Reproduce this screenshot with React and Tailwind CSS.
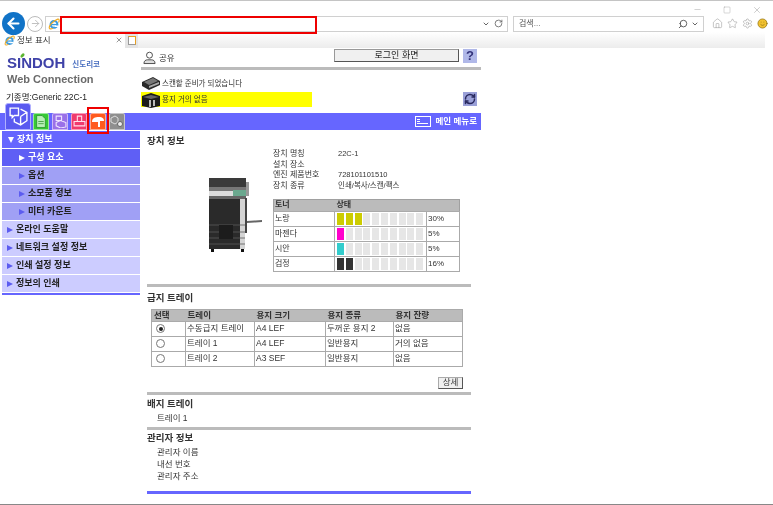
import { ArrowLeft, ArrowRight, ChevronDown, Home, Minus, RefreshCw, RotateCw, Search, Settings, Smile, Square, Star, X } from "lucide-react";

const FONT = "font-['Liberation_Sans','Noto_Sans_CJK_KR',sans-serif]";

const menu = [
    { label: "장치 정보", cls: "bg-[#6666ff] text-white font-bold pl-[6px]", arrow: "down" },
    { label: "구성 요소", cls: "bg-[#5f5ff5] text-white font-bold pl-[17px]", arrowCls: "border-l-white" },
    { label: "옵션", cls: "bg-[#a0a0f5] text-[#222] font-bold pl-[17px]" },
    { label: "소모품 정보", cls: "bg-[#a0a0f5] text-[#222] font-bold pl-[17px]" },
    { label: "미터 카운트", cls: "bg-[#a0a0f5] text-[#222] font-bold pl-[17px]" },
    { label: "온라인 도움말", cls: "bg-[#ccccff] text-[#222] font-bold pl-[5px]" },
    { label: "네트워크 설정 정보", cls: "bg-[#ccccff] text-[#222] font-bold pl-[5px]" },
    { label: "인쇄 설정 정보", cls: "bg-[#ccccff] text-[#222] font-bold pl-[5px]" },
    { label: "정보의 인쇄", cls: "bg-[#ccccff] text-[#222] font-bold pl-[5px]" },
];

const toners = [
    { name: "노랑", count: 3, color: "bg-[#cccc00]", pct: "30%" },
    { name: "마젠다", count: 1, color: "bg-[#ff00cc]", pct: "5%" },
    { name: "시안", count: 1, color: "bg-[#33cccc]", pct: "5%" },
    { name: "검정", count: 2, color: "bg-[#333333]", pct: "16%" },
];

const trays = [
    ["수동급지 트레이", "A4 LEF", "두꺼운 용지 2", "없음"],
    ["트레이 1", "A4 LEF", "일반용지", "거의 없음"],
    ["트레이 2", "A3 SEF", "일반용지", "없음"],
];

function IeIcon({ size = 14 }) {
    return (
        <svg width={size} height={size} viewBox="0 0 16 16" fill="none">
            <circle cx="8" cy="8.5" r="4.6" stroke="#3b9be0" strokeWidth="2.6" />
            <path d="M3.5 8.8h9" stroke="#3b9be0" strokeWidth="1.8" />
            <path d="M9 10h5v2H9z" fill="#fff" />
            <path d="M2 14C.2 11.5 6 4 13 1.5c2.2-.4 2.4 2 1 4.5M2 14c1.2 1 3 .5 4.5-.3" stroke="#eeaa22" strokeWidth="1.5" />
        </svg>
    );
}

function PrinterIcon({ yellow }) {
    return (
        <svg width="20" height="16" viewBox="0 0 20 16">
            {yellow ? (
                <>
                    <path d="M1 4 10 1l9 3v10l-9 2-9-2z" fill="#1c1c1c" />
                    <path d="M2 5l8-2 8 2-8 2z" fill="#666" />
                    <path d="M8 8h2v7H8zM12 8h2v6h-2z" fill="#bbb" />
                </>
            ) : (
                <>
                    <path d="M1 6 12 1l7 4v4l-11 5-7-4z" fill="#2a2a2a" />
                    <path d="M3 6l9-4 5 3-9 4z" fill="#777" />
                    <path d="M8 10l10-4v2L8 12z" fill="#aaa" />
                </>
            )}
        </svg>
    );
}

function Copier() {
    return (
        <svg width="54" height="74" viewBox="0 0 54 74">
            <rect x="0" y="0" width="37" height="9" fill="#3a3a3a" />
            <rect x="0" y="9" width="37" height="4" fill="#777" />
            <rect x="0" y="13" width="39" height="5" fill="#ddd" />
            <rect x="24" y="12" width="15" height="6" fill="#6aa88e" />
            <rect x="37" y="4" width="3" height="14" fill="#999" />
            <rect x="0" y="18" width="37" height="3" fill="#666" />
            <rect x="0" y="21" width="31" height="50" fill="#2a2a2a" />
            <rect x="31" y="21" width="5" height="50" fill="#d4d4d4" />
            <rect x="36" y="20" width="2" height="35" fill="#444" />
            <path d="M0 47h36M0 54h36M0 60h36M0 66h36" stroke="#5a5a5a" strokeWidth="0.8" />
            <rect x="10" y="47" width="14" height="14" fill="#1c1c1c" />
            <path d="M38 43l15-1v2l-15 1z" fill="#666" />
            <rect x="2" y="71" width="3" height="3" fill="#111" />
            <rect x="32" y="71" width="3" height="3" fill="#111" />
        </svg>
    );
}

function TabIcon({ bg, children }) {
    return (
        <div className={`w-[16px] h-[17px] rounded-t-[2px] border border-white/50 flex items-center justify-center ${bg}`}>
            {children}
        </div>
    );
}

function Divider({ className = "" }) {
    return <div className={`h-[3px] bg-[#bbbbbb] ${className}`} />;
}

function Chrome() {
    return (
        <>
            <div className="h-[14px] flex justify-end items-center gap-[21px] pr-[11px] pt-[3px] text-[#888]">
                <Minus size={9} strokeWidth={1} />
                <Square size={8} strokeWidth={1} />
                <X size={10} strokeWidth={1} />
            </div>
            <div className="h-[17px] flex items-center">
                <div className="ml-[2px] -my-[4px] w-[23px] h-[23px] rounded-full bg-[#1173c7] flex items-center justify-center text-white">
                    <ArrowLeft size={17} strokeWidth={3} />
                </div>
                <div className="ml-[2px] w-[16px] h-[16px] rounded-full border border-[#bbb] flex items-center justify-center text-[#bbb]">
                    <ArrowRight size={11} />
                </div>
                <div className="ml-[2px] w-[463px] h-[16px] border border-[#d0d0d0] flex items-center pl-[2px] pr-[4px]">
                    <IeIcon size={12} />
                    <ChevronDown size={8} strokeWidth={3} className="ml-auto text-[#666]" />
                    <RotateCw size={9} strokeWidth={2} className="ml-[4px] text-[#555]" />
                </div>
                <div className="ml-[5px] w-[191px] h-[16px] border border-[#d0d0d0] flex items-center pl-[5px] pr-[4px] text-[8px] text-[#555]">
                    검색...
                    <Search size={10} className="ml-auto -scale-x-100 text-[#444]" />
                    <ChevronDown size={8} strokeWidth={3} className="ml-[3px] text-[#666]" />
                </div>
                <div className="ml-[8px] flex items-center gap-[4px] text-[#999]">
                    <Home size={11} strokeWidth={1.2} />
                    <Star size={11} strokeWidth={1.2} />
                    <Settings size={11} strokeWidth={1.2} />
                    <Smile size={11} strokeWidth={1.5} className="fill-[#f2c230] text-[#8a6d10]" />
                </div>
            </div>
            <div className="h-[16px] flex">
                <div className="w-[125px] h-full flex items-center pl-[4px] text-[8.5px] text-[#333]">
                    <IeIcon size={11} />
                    <span className="ml-[2px]">정보 표시</span>
                    <X size={8} className="ml-auto mr-[2px] text-[#666]" />
                </div>
                <div className="w-[13px] h-full bg-[#e4e4e4] flex items-center justify-center">
                    <div className="w-[8px] h-[9px] border border-[#999] bg-white border-t-[#e8a020] border-r-[#e8a020]" />
                </div>
                <div className="w-[627px] h-full bg-gradient-to-b from-white to-[#ececec]" />
            </div>
        </>
    );
}

function Header() {
    return (
        <div className="h-[65px] flex">
            <div className="w-[141px] pl-[7px]">
                <div className="relative mt-[5px] h-[19px] flex items-end">
                    <span className="text-[15px] leading-[18px] font-bold text-[#3f42a8]">SINDOH</span>
                    <span className="ml-[7px] mb-[2px] text-[7.5px] font-bold text-[#4a6fc0]">신도리코</span>
                    {/* leaf over the I */}
                    <div className="absolute left-[13px] top-[1px] w-[5px] h-[3px] rounded-[50%] bg-[#5cb531] -rotate-45" />
                </div>
                <div className="text-[11px] leading-[14px] font-bold text-[#6a6a6a]">Web Connection</div>
                <div className="mt-[5px] -ml-[1px] text-[8.5px] leading-[12px] text-[#222]">기종명:Generic 22C-1</div>
            </div>
            <div className="w-[340px]">
                <div className="h-[19px] flex items-end">
                    <svg width="13" height="15" viewBox="0 0 14 15" className="ml-[2px] mb-[2px]" fill="none" stroke="#444">
                        <circle cx="7" cy="5" r="3.2" />
                        <path d="M1 14c0-3 2-4 4-4h4c2 0 4 1 4 4z" fill="#ddd" />
                    </svg>
                    <span className="ml-[3px] mb-[3px] text-[8.5px] leading-[12px] text-[#333]">공유</span>
                    <div className="ml-auto mb-[5px] w-[125px] h-[13px] bg-[#f0f0f0] border border-[#999] border-r-[#555] border-b-[#555] flex items-center justify-center text-[9px] text-[#222]">
                        로그인 화면
                    </div>
                    <div className="ml-[4px] mr-[4px] mb-[4px] w-[14px] h-[14px] bg-[#b0b8e8] flex items-center justify-center text-[13px] font-bold text-[#33337a]">?</div>
                </div>
                <Divider />
                <div className="mt-[6px] h-[16px] flex items-center">
                    <PrinterIcon />
                    <span className="ml-[1px] text-[7.5px] text-[#333]">스캔할 준비가 되었습니다</span>
                </div>
                <div className="h-[15px] flex">
                    <div className="w-[171px] bg-[#ffff00] flex items-center">
                        <PrinterIcon yellow />
                        <span className="ml-[1px] text-[7.5px] text-[#333]">용지 거의 없음</span>
                    </div>
                    <div className="ml-auto mr-[4px] w-[14px] h-[14px] bg-[#9aa0d8] flex items-center justify-center text-[#2a2a60]">
                        <RefreshCw size={12} strokeWidth={3} />
                    </div>
                </div>
            </div>
        </div>
    );
}

function Bar() {
    return (
        <div className="w-[481px] h-[17px] bg-[#6666ff] flex items-end">
            <div className="ml-[5px] w-[26px] h-[27px] bg-[#5a5af0] rounded-t-[3px] border border-[#b0b0ff] flex items-center justify-center">
                <svg width="21" height="21" viewBox="0 0 20 20" fill="none" stroke="#fff" strokeWidth="1.3">
                    <path d="M2 2h8v7H6l-2 2V9H2zM12 3l6 3v8l-6 4-6-3v-3M12 10l6-4M12 10v8" />
                </svg>
            </div>
            <div className="ml-[2px] flex gap-[3px] items-end">
                <TabIcon bg="bg-[#35c935]">
                    <svg width="10" height="13" viewBox="0 0 9 12" fill="#b8f0b8" stroke="#188018" strokeWidth="0.6"><path d="M.5.5h5l3 3v8h-8zM2 6h5M2 8h5" /></svg>
                </TabIcon>
                <TabIcon bg="bg-[#9a70e8]">
                    <svg width="13" height="13" viewBox="0 0 12 12" fill="none" stroke="#efe6ff"><path d="M2 1h5v4H2zM6 5l5 2v4l-5 1-4-2V7z" /></svg>
                </TabIcon>
                <TabIcon bg="bg-[#f03a6e]">
                    <svg width="13" height="13" viewBox="0 0 12 12" fill="none" stroke="#ffe0ea"><path d="M4 1h4v5H4zM1 6h10v4H1z" /></svg>
                </TabIcon>
                <TabIcon bg="bg-[#ff5a1e]">
                    <svg width="14" height="12" viewBox="0 0 14 12" fill="#fff"><path d="M1 6C1 2 4 1 8 1c3 0 5 1 5 4H9v6H7V6z" /></svg>
                </TabIcon>
                <TabIcon bg="bg-[#8f8f8f]">
                    <svg width="14" height="13" viewBox="0 0 14 13" fill="none" stroke="#ddd"><path d="M1 3l4-2 3 2v4L5 9 1 7z" /><circle cx="10" cy="9" r="2.5" fill="#eee" stroke="#666" /></svg>
                </TabIcon>
            </div>
            <div className="ml-auto self-center mr-[4px] flex items-center gap-[5px]">
                <div className="w-[16px] h-[11px] border border-white flex flex-col justify-center gap-[1px] pl-[1px]">
                    <div className="w-[3px] h-[1px] bg-white" />
                    <div className="w-[3px] h-[1px] bg-white" />
                    <div className="w-[11px] h-[1px] bg-white" />
                </div>
                <span className="text-[8.5px] font-bold text-white">메인 메뉴로</span>
            </div>
        </div>
    );
}

function Sidebar() {
    return (
        <div className="w-[141px] pl-[2px] pt-[1px] pr-[1px]">
            {menu.map((item) => (
                <div key={item.label} className={`h-[17px] mb-[1px] flex items-center text-[9px] ${item.cls}`}>
                    {item.arrow === "down" ? (
                        <span className="w-0 h-0 border-x-[3.5px] border-x-transparent border-t-[6px] border-t-white" />
                    ) : (
                        <span className={`w-0 h-0 border-y-[3.5px] border-y-transparent border-l-[6px] ${item.arrowCls || "border-l-[#5c5cf0]"}`} />
                    )}
                    <span className="ml-[3px]">{item.label}</span>
                </div>
            ))}
            <div className="h-[2px] bg-[#6666ff]" />
        </div>
    );
}

function TonerTable() {
    return (
        <table className="ml-[126px] mt-[7px] w-[187px] table-fixed border-collapse border border-[#a0a0a0] text-[8px] text-[#333]">
            <colgroup>
                <col className="w-[61px]" />
                <col className="w-[92px]" />
                <col />
            </colgroup>
            <thead>
                <tr className="h-[12px] bg-[#bbbbbb]">
                    <th className="pl-[1px] text-left font-bold leading-[10px]">토너</th>
                    <th colSpan={2} className="pl-[2px] text-left font-bold leading-[10px]">상태</th>
                </tr>
            </thead>
            <tbody>
                {toners.map((t) => (
                    <tr key={t.name} className="h-[15px]">
                        <td className="border border-[#aaaaaa] pl-[1px] leading-[11px]">{t.name}</td>
                        <td className="border border-[#aaaaaa] p-0">
                            <div className="flex gap-[1.8px] pl-[2px]">
                                {[0, 1, 2, 3, 4, 5, 6, 7, 8, 9].map((i) => (
                                    <div key={i} className={`shrink-0 w-[7px] h-[11.5px] ${i < t.count ? t.color : "bg-[#e6e6e6]"}`} />
                                ))}
                            </div>
                        </td>
                        <td className="border border-[#aaaaaa] pl-[1px] leading-[11px]">{t.pct}</td>
                    </tr>
                ))}
            </tbody>
        </table>
    );
}

function TrayTable() {
    return (
        <table className="ml-[4px] mt-[5px] w-[312px] table-fixed border-collapse border border-[#aaaaaa] text-[8.5px] text-[#333]">
            <thead>
                <tr className="h-[12px] bg-[#bbbbbb]">
                    <th className="w-[34px] pl-[2px] text-left font-bold leading-[10px]">선택</th>
                    <th className="w-[69px] pl-[2px] text-left font-bold leading-[10px]">트레이</th>
                    <th className="w-[71px] pl-[2px] text-left font-bold leading-[10px]">용지 크기</th>
                    <th className="w-[68px] pl-[2px] text-left font-bold leading-[10px]">용지 종류</th>
                    <th className="pl-[2px] text-left font-bold leading-[10px]">용지 잔량</th>
                </tr>
            </thead>
            <tbody>
                {trays.map((row, i) => (
                    <tr key={row[0]} className="h-[15px]">
                        <td className="border border-[#aaaaaa] p-0">
                            <div className="ml-[4px] w-[9px] h-[9px] rounded-full border border-[#777] bg-white flex items-center justify-center">
                                {i === 0 && <div className="w-[4px] h-[4px] rounded-full bg-[#222]" />}
                            </div>
                        </td>
                        {row.map((cell) => (
                            <td key={cell} className="border border-[#aaaaaa] pl-[1px] leading-[11px]">{cell}</td>
                        ))}
                    </tr>
                ))}
            </tbody>
        </table>
    );
}

function Content() {
    return (
        <div className="w-[330px] pl-[6px] text-[#333]">
            <div className="w-[324px]">
                <div className="mt-[5px] h-[12px] text-[9.5px] leading-[12px] font-bold">장치 정보</div>
                <div className="relative">
                    <div className="ml-[126px] mt-[2px] text-[8px] leading-[10.7px]">
                        {[["장치 명칭", "22C-1"], ["설치 장소", ""], ["엔진 제품번호", "728101101510"], ["장치 종류", "인쇄/복사/스캔/팩스"]].map(([k, v]) => (
                            <div key={k} className="flex">
                                <span className="w-[65px]">{k}</span>
                                <span className="text-[7.5px]">{v}</span>
                            </div>
                        ))}
                    </div>
                    <div className="absolute left-[62px] top-[29px]">
                        <Copier />
                    </div>
                    <TonerTable />
                </div>
                <Divider className="mt-[12px]" />
                <div className="mt-[5px] text-[9.5px] leading-[12px] font-bold">급지 트레이</div>
                <TrayTable />
                <div className="mt-[10px] flex justify-end pr-[8px]">
                    <div className="w-[25px] h-[12px] bg-[#f0f0f0] border border-[#aaa] border-r-[#555] border-b-[#555] flex items-center justify-center text-[8.5px]">상세</div>
                </div>
                <Divider className="mt-[3px]" />
                <div className="mt-[3px] text-[9.5px] leading-[12px] font-bold">배지 트레이</div>
                <div className="mt-[2px] ml-[10px] text-[8.5px] leading-[12px]">트레이 1</div>
                <Divider className="mt-[3px]" />
                <div className="mt-[2px] text-[9.5px] leading-[12px] font-bold">관리자 정보</div>
                <div className="mt-[2px] ml-[10px] text-[8.5px] leading-[12px]">
                    <div>관리자 이름</div>
                    <div>내선 번호</div>
                    <div>관리자 주소</div>
                </div>
                <div className="mt-[9px] h-[3px] bg-[#6666ff]" />
            </div>
        </div>
    );
}

function App() {
    return (
        <div className={`relative w-[773px] h-[505px] overflow-hidden bg-white border-t border-[#c4c4c4] blur-[0.35px] ${FONT}`}>
            <Chrome />
            <Header />
            <Bar />
            <div className="flex">
                <Sidebar />
                <Content />
            </div>
            {/* red annotation boxes from the screenshot */}
            <div className="absolute left-[60px] top-[15px] w-[257px] h-[18px] border-2 border-[#ee0000]" />
            <div className="absolute left-[87px] top-[106px] w-[22px] h-[27px] border-2 border-[#ee0000]" />
            <div className="absolute left-0 bottom-0 w-full h-[1px] bg-[#888]" />
        </div>
    );
}

export default App;
